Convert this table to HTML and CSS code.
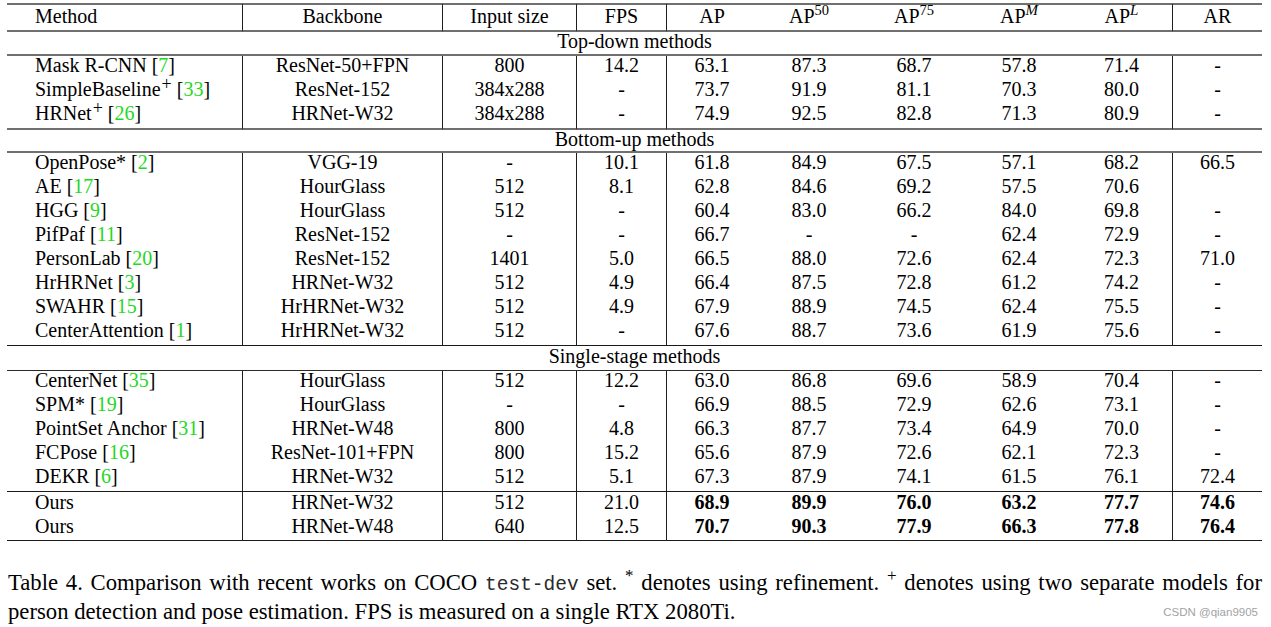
FILE: index.html
```html
<!DOCTYPE html>
<html lang="en">
<head>
<meta charset="utf-8">
<title>Table 4</title>
<link rel="stylesheet" href="styles.css">
</head>
<body>
<div class="page">
  <table class="results">
    <colgroup>
      <col class="c-method"><col class="c-backbone"><col class="c-input"><col class="c-fps">
      <col class="c-ap"><col class="c-ap50"><col class="c-ap75"><col class="c-apm"><col class="c-apl"><col class="c-ar">
    </colgroup>
    <thead>
      <tr class="row head">
        <th>Method</th><th>Backbone</th><th>Input size</th><th>FPS</th>
        <th>AP</th><th>AP<span class="sup">50</span></th><th>AP<span class="sup">75</span></th>
        <th>AP<span class="sup it">M</span></th><th>AP<span class="sup it">L</span></th><th>AR</th>
      </tr>
    </thead>
    <tbody>
      <tr class="section s-top"><td colspan="10">Top-down methods</td></tr>
      <tr class="row"><td>Mask R-CNN [<span class="cite">7</span>]</td><td>ResNet-50+FPN</td><td>800</td><td>14.2</td><td>63.1</td><td>87.3</td><td>68.7</td><td>57.8</td><td>71.4</td><td>-</td></tr>
      <tr class="row"><td>SimpleBaseline<span class="plus">+</span> [<span class="cite">33</span>]</td><td>ResNet-152</td><td>384x288</td><td>-</td><td>73.7</td><td>91.9</td><td>81.1</td><td>70.3</td><td>80.0</td><td>-</td></tr>
      <tr class="row end-thick"><td>HRNet<span class="plus">+</span> [<span class="cite">26</span>]</td><td>HRNet-W32</td><td>384x288</td><td>-</td><td>74.9</td><td>92.5</td><td>82.8</td><td>71.3</td><td>80.9</td><td>-</td></tr>
      <tr class="section s-bottom"><td colspan="10">Bottom-up methods</td></tr>
      <tr class="row"><td>OpenPose* [<span class="cite">2</span>]</td><td>VGG-19</td><td>-</td><td>10.1</td><td>61.8</td><td>84.9</td><td>67.5</td><td>57.1</td><td>68.2</td><td>66.5</td></tr>
      <tr class="row"><td>AE [<span class="cite">17</span>]</td><td>HourGlass</td><td>512</td><td>8.1</td><td>62.8</td><td>84.6</td><td>69.2</td><td>57.5</td><td>70.6</td><td></td></tr>
      <tr class="row"><td>HGG [<span class="cite">9</span>]</td><td>HourGlass</td><td>512</td><td>-</td><td>60.4</td><td>83.0</td><td>66.2</td><td>84.0</td><td>69.8</td><td>-</td></tr>
      <tr class="row"><td>PifPaf [<span class="cite">11</span>]</td><td>ResNet-152</td><td>-</td><td>-</td><td>66.7</td><td>-</td><td>-</td><td>62.4</td><td>72.9</td><td>-</td></tr>
      <tr class="row"><td>PersonLab [<span class="cite">20</span>]</td><td>ResNet-152</td><td>1401</td><td>5.0</td><td>66.5</td><td>88.0</td><td>72.6</td><td>62.4</td><td>72.3</td><td>71.0</td></tr>
      <tr class="row"><td>HrHRNet [<span class="cite">3</span>]</td><td>HRNet-W32</td><td>512</td><td>4.9</td><td>66.4</td><td>87.5</td><td>72.8</td><td>61.2</td><td>74.2</td><td>-</td></tr>
      <tr class="row"><td>SWAHR [<span class="cite">15</span>]</td><td>HrHRNet-W32</td><td>512</td><td>4.9</td><td>67.9</td><td>88.9</td><td>74.5</td><td>62.4</td><td>75.5</td><td>-</td></tr>
      <tr class="row end-thin"><td>CenterAttention [<span class="cite">1</span>]</td><td>HrHRNet-W32</td><td>512</td><td>-</td><td>67.6</td><td>88.7</td><td>73.6</td><td>61.9</td><td>75.6</td><td>-</td></tr>
      <tr class="section s-single"><td colspan="10">Single-stage methods</td></tr>
      <tr class="row"><td>CenterNet [<span class="cite">35</span>]</td><td>HourGlass</td><td>512</td><td>12.2</td><td>63.0</td><td>86.8</td><td>69.6</td><td>58.9</td><td>70.4</td><td>-</td></tr>
      <tr class="row"><td>SPM* [<span class="cite">19</span>]</td><td>HourGlass</td><td>-</td><td>-</td><td>66.9</td><td>88.5</td><td>72.9</td><td>62.6</td><td>73.1</td><td>-</td></tr>
      <tr class="row"><td>PointSet Anchor [<span class="cite">31</span>]</td><td>HRNet-W48</td><td>800</td><td>4.8</td><td>66.3</td><td>87.7</td><td>73.4</td><td>64.9</td><td>70.0</td><td>-</td></tr>
      <tr class="row"><td>FCPose [<span class="cite">16</span>]</td><td>ResNet-101+FPN</td><td>800</td><td>15.2</td><td>65.6</td><td>87.9</td><td>72.6</td><td>62.1</td><td>72.3</td><td>-</td></tr>
      <tr class="row end-thin"><td>DEKR [<span class="cite">6</span>]</td><td>HRNet-W32</td><td>512</td><td>5.1</td><td>67.3</td><td>87.9</td><td>74.1</td><td>61.5</td><td>76.1</td><td>72.4</td></tr>
      <tr class="row ours"><td>Ours</td><td>HRNet-W32</td><td>512</td><td>21.0</td><td>68.9</td><td>89.9</td><td>76.0</td><td>63.2</td><td>77.7</td><td>74.6</td></tr>
      <tr class="row ours end-thin"><td>Ours</td><td>HRNet-W48</td><td>640</td><td>12.5</td><td>70.7</td><td>90.3</td><td>77.9</td><td>66.3</td><td>77.8</td><td>76.4</td></tr>
    </tbody>
  </table>
  <p class="caption">
    <span class="cap-line full">Table 4. Comparison with recent works on COCO <span class="tt">test-dev</span> set. <span class="cap-sup">*</span> denotes using refinement. <span class="cap-sup">+</span> denotes using two separate models for</span>
    <span class="cap-line">person detection and pose estimation. FPS is measured on a single RTX 2080Ti.</span>
  </p>
  <span class="watermark">CSDN @qian9905</span>
</div>
</body>
</html>
```
FILE: styles.css
```css
html, body {
  margin: 0;
  padding: 0;
  background: #ffffff;
}

body {
  font-family: "Liberation Serif", "Times New Roman", serif;
  color: #000000;
}

.page {
  position: relative;
  box-sizing: border-box;
  width: 1271px;
  height: 627px;
  padding: 3px 9px 0 7px;
  overflow: hidden;
}

.results {
  border-collapse: separate;
  border-spacing: 0;
  table-layout: fixed;
  width: 1255px;
  font-size: 20px;
}

.c-method { width: 236px; }
.c-backbone { width: 200px; }
.c-input { width: 134px; }
.c-fps { width: 90px; }
.c-ap { width: 90px; }
.c-ap50 { width: 104px; }
.c-ap75 { width: 106px; }
.c-apm { width: 104px; }
.c-apl { width: 102px; }
.c-ar { width: 89px; }

.results th,
.results td {
  padding: 0 0 5px 0;
  line-height: 19px;
  text-align: center;
  font-weight: normal;
  white-space: nowrap;
  vertical-align: top;
}

.results .row td:first-child,
.results .row th:first-child {
  text-align: left;
  padding-left: 28px;
}

.results .row td:nth-child(-n+4),
.results .row th:nth-child(-n+4),
.results .row td:nth-child(9),
.results .row th:nth-child(9) {
  border-right: 1px solid #1e1e1e;
}

/* header: 2px rule, 25px content, 2px rule */
.results .head th {
  padding: 1px 0 4px 0;
  line-height: 20px;
  border-top: 2px solid #707070;
  border-bottom: 2px solid #707070;
}

.results .section td {
  line-height: 18px;
}

.results .s-top td {
  padding-bottom: 4px;
  border-bottom: 2px solid #707070;
}

.results .s-bottom td {
  padding-bottom: 3px;
  border-bottom: 2px solid #707070;
}

.results .s-single td {
  line-height: 20px;
  padding-bottom: 4px;
  border-bottom: 1px solid #2a2a2a;
}

.results .end-thick td {
  border-bottom: 2px solid #707070;
}

.results .end-thin td {
  border-bottom: 1px solid #1a1a1a;
}

.results .ours td {
  line-height: 20px;
  padding-bottom: 4px;
}

.results .ours td:nth-child(n+5) {
  font-weight: bold;
}

.sup {
  font-size: 14.5px;
  vertical-align: 8px;
  line-height: 0;
}

.sup.it {
  font-style: italic;
  font-size: 15px;
}

.plus {
  font-size: 18px;
  vertical-align: 6px;
  line-height: 0;
  margin-left: 1px;
}

.cite {
  color: #1fd81f;
}

.caption {
  margin: 29px 0 0 1px;
  width: 1254px;
  font-size: 22.7px;
  line-height: 26.5px;
}

.cap-line {
  display: block;
  text-align: left;
}

.cap-line.full {
  text-align: justify;
  text-align-last: justify;
}

.tt {
  font-family: "Liberation Mono", "Courier New", monospace;
  font-size: 19.5px;
  color: #2a2a2a;
}

.cap-sup {
  font-size: 17px;
  vertical-align: 9px;
  line-height: 0;
}

.watermark {
  position: absolute;
  right: 13px;
  bottom: 9px;
  font-family: "Liberation Sans", Arial, sans-serif;
  font-size: 11.5px;
  color: #a3a3a3;
}
```
